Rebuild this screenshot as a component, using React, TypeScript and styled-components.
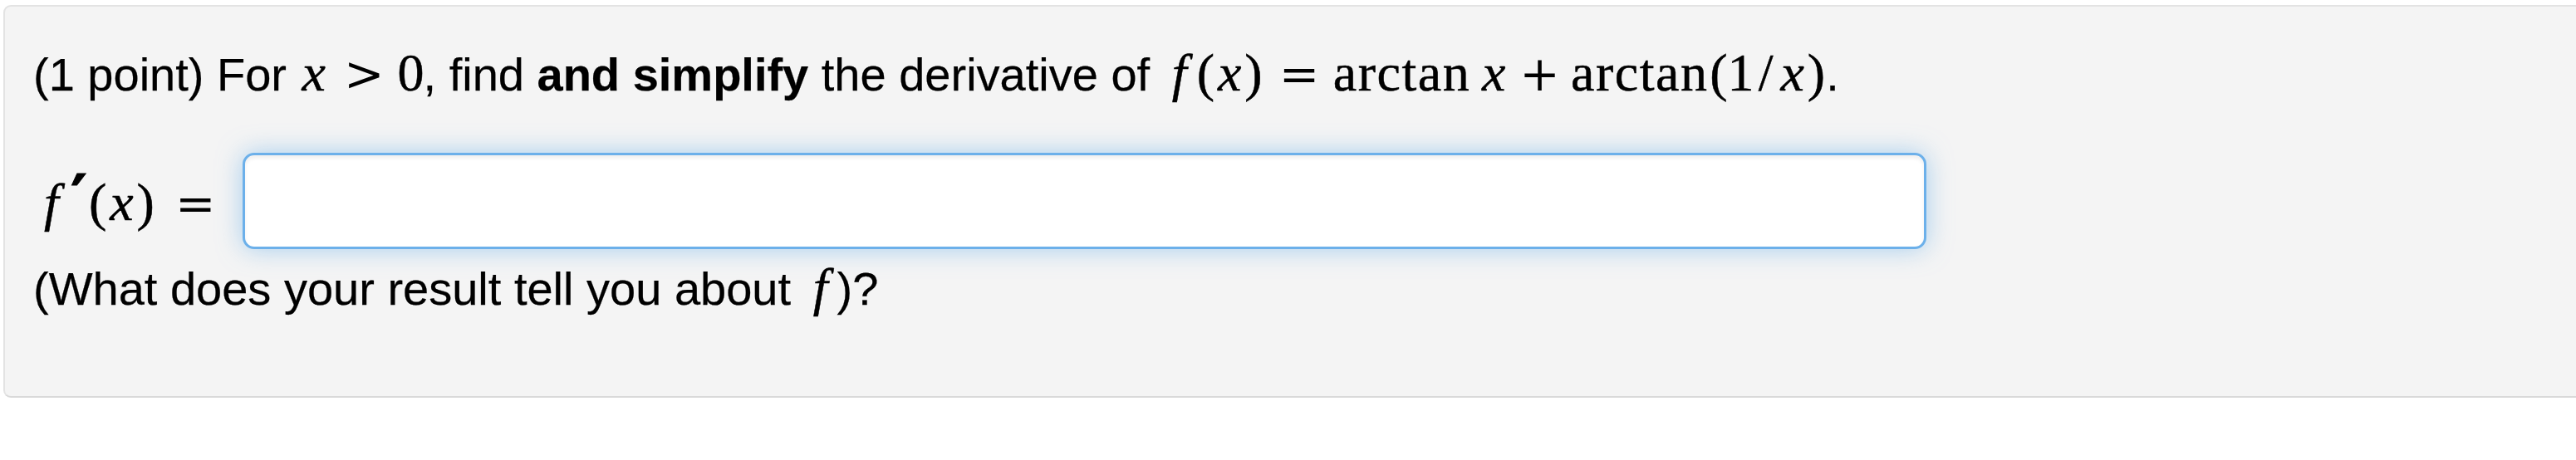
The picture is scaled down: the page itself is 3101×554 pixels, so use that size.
import React from "react";
import styled, { createGlobalStyle } from "styled-components";

const Global = createGlobalStyle`
  html, body {
    margin: 0;
    padding: 0;
    background: #ffffff;
    overflow: hidden;
  }
  body {
    font-family: "Liberation Sans", Arial, Helvetica, sans-serif;
    color: #000000;
  }
`;

const Panel = styled.div`
  box-sizing: border-box;
  height: 473px;
  margin: 6px -20px 0 4px;
  padding: 48px 34px 0;
  background: #f4f4f4;
  border: 2px solid #e3e3e3;
  border-bottom-color: #d9d9d9;
  border-radius: 9px;
  display: flex;
  flex-direction: column;
  align-items: flex-start;
`;

const TextLine = styled.div`
  font-size: 56px;
  line-height: 68px;
  white-space: nowrap;
  -webkit-text-stroke: 0.25px #000;
`;

const Followup = styled(TextLine)`
  margin-top: 14px;
`;

const Strong = styled.b`
  font-weight: 700;
`;

const MathRun = styled.span`
  font-family: "Liberation Serif", "Times New Roman", serif;
  font-size: 64px;
  line-height: 1;
  white-space: nowrap;
  -webkit-text-stroke: 0.5px #000;
`;

type TokProps = { $w: number; $italic?: boolean; $ml?: number; $mr?: number };

const Tok = styled.span<TokProps>`
  display: inline-flex;
  justify-content: center;
  width: ${(p) => p.$w}px;
  margin-left: ${(p) => p.$ml ?? 0}px;
  margin-right: ${(p) => p.$mr ?? 0}px;
  font-style: ${(p) => (p.$italic ? "italic" : "normal")};
`;

const Op = styled(Tok)`
  font-family: "DejaVu Serif", "Liberation Serif", serif;
  font-size: 58px;
  -webkit-text-stroke: 0;
`;

const Fn = styled(Tok)`
  letter-spacing: 1.5px;
`;

const Prime = styled(Tok)`
  font-family: "DejaVu Sans", sans-serif;
  font-size: 76px;
  font-weight: 700;
  -webkit-text-stroke: 1px #000;
`;

const AnswerRow = styled.div`
  display: flex;
  align-items: center;
  margin-top: 60px;
  gap: 33px;
`;

const Label = styled.div`
  font-size: 56px;
  line-height: 68px;
  white-space: nowrap;
  margin-bottom: 4px;
`;

const AnswerInput = styled.input`
  box-sizing: border-box;
  width: 2027px;
  height: 116px;
  margin: 0;
  padding: 0 20px;
  background: #ffffff;
  border: 3px solid #6cb0ea;
  border-radius: 14px;
  outline: none;
  font-family: "Liberation Sans", Arial, sans-serif;
  font-size: 56px;
  box-shadow: inset 0 4px 4px rgba(0, 0, 0, 0.06), 0 0 30px rgba(102, 175, 233, 0.55);
`;

export default function App() {
  return (
    <>
      <Global />
      <Panel>
        <TextLine>
          (1 point) For{" "}
          <MathRun>
            <Tok $w={34.3} $italic>x</Tok>
            <Op $w={46.7} $ml={20} $mr={18}>&gt;</Op>
            <Tok $w={30}>0</Tok>
          </MathRun>
          , find <Strong>and simplify</Strong> the derivative of{" "}
          <MathRun>
            <Tok $w={40} $italic>f</Tok>
            <Tok $w={23.3}>(</Tok>
            <Tok $w={34.3} $italic>x</Tok>
            <Tok $w={23.3}>)</Tok>
            <Op $w={46.7} $ml={20} $mr={16.7}>=</Op>
            <Fn $w={167} $mr={10}>arctan</Fn>
            <Tok $w={34.3} $italic>x</Tok>
            <Op $w={46.7} $ml={15} $mr={13.3}>+</Op>
            <Fn $w={167}>arctan</Fn>
            <Tok $w={23.3}>(</Tok>
            <Tok $w={30}>1</Tok>
            <Tok $w={30}>/</Tok>
            <Tok $w={34.3} $italic>x</Tok>
            <Tok $w={23.3}>)</Tok>
          </MathRun>
          .
        </TextLine>
        <AnswerRow>
          <Label>
            <MathRun>
              <Tok $w={44} $italic>f</Tok>
              <Prime $w={22}>′</Prime>
              <Tok $w={23.3}>(</Tok>
              <Tok $w={34.3} $italic>x</Tok>
              <Tok $w={23.3}>)</Tok>
              <Op $w={46.7} $ml={25}>=</Op>
            </MathRun>
          </Label>
          <AnswerInput type="text" aria-label="f'(x)" />
        </AnswerRow>
        <Followup>
          (What does your result tell you about{" "}
          <MathRun>
            <Tok $w={40} $italic>f</Tok>
          </MathRun>
          )?
        </Followup>
      </Panel>
    </>
  );
}
